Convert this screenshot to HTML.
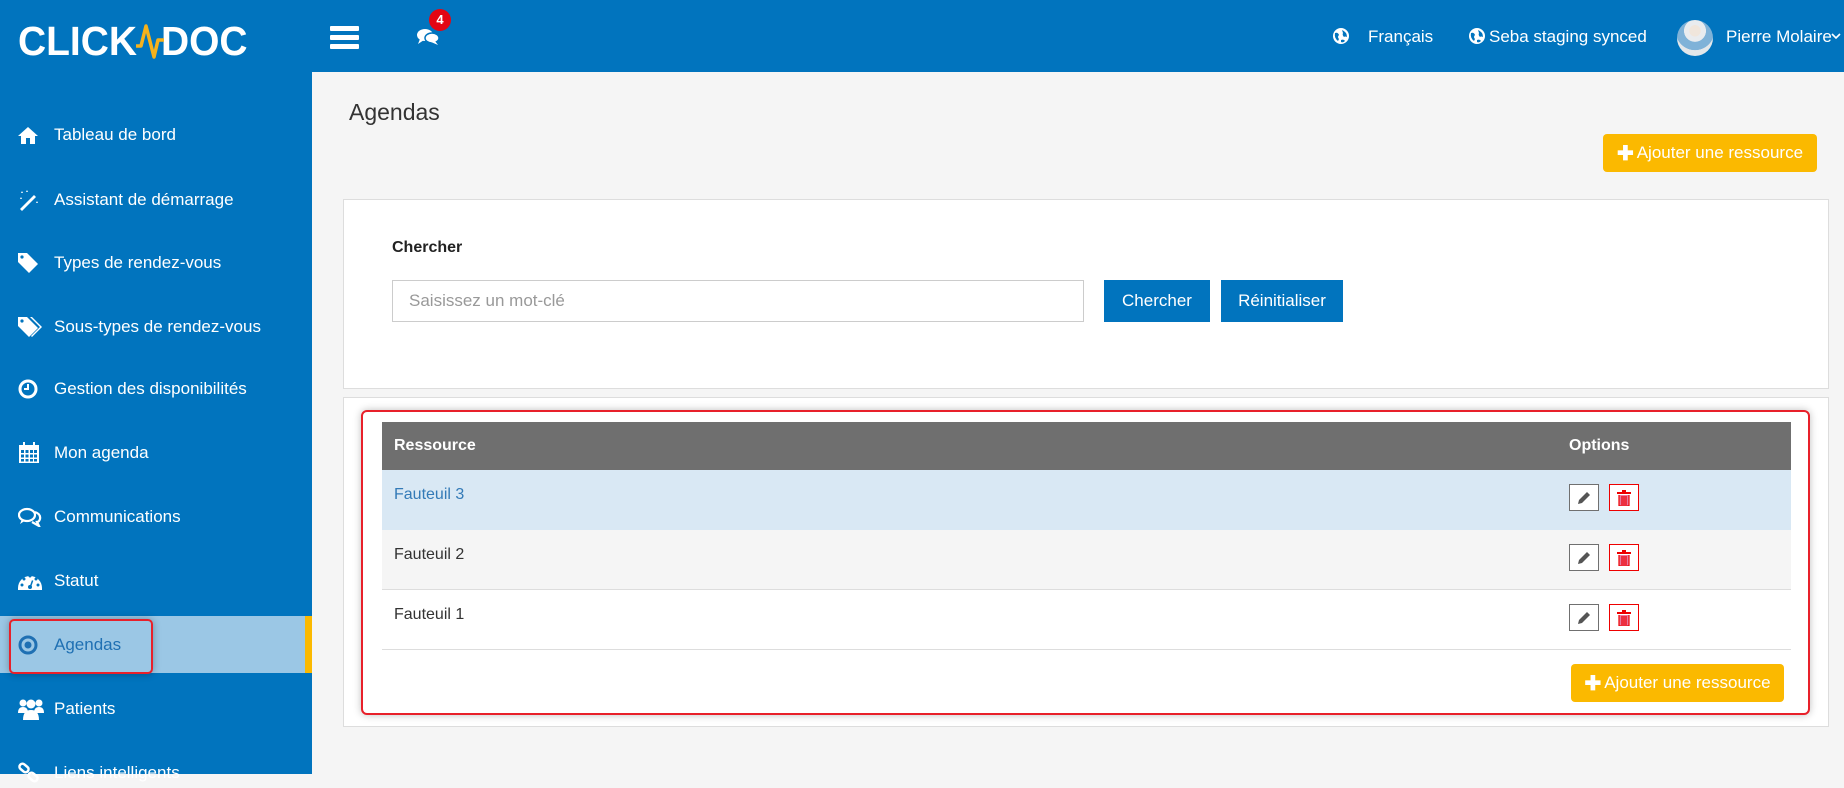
<!DOCTYPE html>
<html><head><meta charset="utf-8"><style>
*{box-sizing:border-box;margin:0;padding:0}
body{width:1844px;height:774px;overflow:hidden;background:#f5f5f5;font-family:"Liberation Sans",Arial,sans-serif;position:relative}
.top{position:absolute;left:0;top:0;width:1844px;height:72px;background:#0174be;color:#fff}
.side{position:absolute;left:0;top:72px;width:312px;height:702px;background:#0174be;color:#fff}
.abs{position:absolute}
.item{position:absolute;left:0;width:312px;height:30px;font-size:17px;display:flex;align-items:center}
.item svg{position:absolute;left:18px}
.item span{position:absolute;left:54px}
.btnY{position:absolute;background:#fbb900;color:#fff;border-radius:4px;font-size:17px;display:flex;align-items:center;justify-content:center}
.panel{position:absolute;background:#fff;border:1px solid #ddd}
.ic{position:absolute;width:30px;height:27px;border:1px solid #707070;background:#fff;display:flex;align-items:center;justify-content:center}
.ic.d{border-color:#e00}
</style></head><body>
<div class="top">
  <div class="abs" style="left:18px;top:18px;font-size:41px;font-weight:bold;transform:scaleX(0.95);transform-origin:left;white-space:nowrap">CLICK</div>
  <div class="abs" style="left:161px;top:18px;font-size:41px;font-weight:bold;transform:scaleX(0.95);transform-origin:left;white-space:nowrap">DOC</div>
  <svg class="abs" style="left:136px;top:20px" width="28" height="42" viewBox="0 0 28 42"><polyline points="0,26 5,26 10,6 18,37 22,20 28,20" fill="none" stroke="#f6b21b" stroke-width="3.5" stroke-linejoin="round"/></svg>
  <div class="abs" style="left:330px;top:26px;width:29px;height:5px;background:#fff;border-radius:1px;box-shadow:0 9px 0 #fff,0 18px 0 #fff"></div>
  <svg class="abs" style="left:417px;top:28px" width="22" height="18" viewBox="0 0 22 18"><ellipse cx="8" cy="7" rx="8" ry="6" fill="#fff"/><path d="M3 11 L1 16 L7 12Z" fill="#fff"/><ellipse cx="15" cy="10" rx="7" ry="5" fill="#fff" stroke="#0174be" stroke-width="1.5"/><path d="M18 13 L21 17 L14 14Z" fill="#fff"/></svg>
  <div class="abs" style="left:429px;top:9px;width:22px;height:22px;border-radius:50%;background:#e30613;font-size:13px;font-weight:bold;text-align:center;line-height:22px">4</div>
  <svg class="abs" style="left:1333px;top:28px" width="16" height="16" viewBox="0 0 16 16"><circle cx="8" cy="8" r="8" fill="#fff"/><path d="M2 5 Q5 4 6 7 Q4 9 6 11 L5 13 Q1 10 2 5Z M9 2 Q14 4 14 9 Q12 8 11 9 Q9 7 10 5Z M8 12 Q11 11 12 13 Q10 15 8 14Z" fill="#0174be"/></svg>
  <div class="abs" style="left:1368px;top:27px;font-size:17px">Français</div>
  <svg class="abs" style="left:1469px;top:28px" width="16" height="16" viewBox="0 0 16 16"><circle cx="8" cy="8" r="8" fill="#fff"/><path d="M2 5 Q5 4 6 7 Q4 9 6 11 L5 13 Q1 10 2 5Z M9 2 Q14 4 14 9 Q12 8 11 9 Q9 7 10 5Z M8 12 Q11 11 12 13 Q10 15 8 14Z" fill="#0174be"/></svg>
  <div class="abs" style="left:1489px;top:27px;font-size:17px">Seba staging synced</div>
  <div class="abs" style="left:1677px;top:20px;width:36px;height:36px;border-radius:50%;background:radial-gradient(circle at 50% 30%,#f0e6dc 0 18%,#e9ecef 19% 35%,#7fb2d8 36% 62%,#e3e7ea 63%)"></div>
  <div class="abs" style="left:1726px;top:27px;font-size:17px">Pierre Molaire</div>
  <svg class="abs" style="left:1831px;top:33px" width="10" height="7" viewBox="0 0 10 7"><polyline points="1,1 5,5 9,1" fill="none" stroke="#fff" stroke-width="1.6"/></svg>
</div>
<div class="side">
  <div class="item" style="top:48px"><svg width="20" height="18" viewBox="0 0 20 18"><path d="M10 1 L20 10 L17 10 L17 18 L12 18 L12 12 L8 12 L8 18 L3 18 L3 10 L0 10Z" fill="#fff"/></svg><span>Tableau de bord</span></div>
  <div class="item" style="top:113px"><svg width="22" height="22" viewBox="0 0 22 22"><path d="M2 20 L16 6 L18 8 L4 22Z" fill="#fff"/><path d="M4 2 L5 4 L3 4Z M9 1 L10 3 L8 3Z M19 12 L20 14 L18 14Z M3 8 L4 10 L2 10Z" fill="#fff"/></svg><span>Assistant de démarrage</span></div>
  <div class="item" style="top:176px"><svg width="20" height="20" viewBox="0 0 20 20"><path d="M0 0 L9 0 L20 11 L11 20 L0 9Z" fill="#fff"/><circle cx="4" cy="4" r="1.6" fill="#0174be"/></svg><span>Types de rendez-vous</span></div>
  <div class="item" style="top:240px"><svg width="24" height="20" viewBox="0 0 24 20"><path d="M0 0 L9 0 L20 11 L11 20 L0 9Z" fill="#fff"/><path d="M12 0 L14 0 L24 10 L14 20 L13 19 L22 10Z" fill="#fff"/><circle cx="4" cy="4" r="1.6" fill="#0174be"/></svg><span>Sous-types de rendez-vous</span></div>
  <div class="item" style="top:302px"><svg width="20" height="20" viewBox="0 0 20 20"><circle cx="10" cy="10" r="8" fill="none" stroke="#fff" stroke-width="3"/><path d="M10 5 L10 10 L6 10" fill="none" stroke="#fff" stroke-width="2"/></svg><span>Gestion des disponibilités</span></div>
  <div class="item" style="top:366px"><svg width="22" height="22" viewBox="0 0 22 22"><rect x="1" y="3" width="20" height="18" fill="#fff"/><g fill="#0174be"><rect x="3" y="8" width="3" height="3"/><rect x="7.5" y="8" width="3" height="3"/><rect x="12" y="8" width="3" height="3"/><rect x="16" y="8" width="3" height="3"/><rect x="3" y="12.5" width="3" height="3"/><rect x="7.5" y="12.5" width="3" height="3"/><rect x="12" y="12.5" width="3" height="3"/><rect x="16" y="12.5" width="3" height="3"/><rect x="3" y="17" width="3" height="2.5"/><rect x="7.5" y="17" width="3" height="2.5"/><rect x="12" y="17" width="3" height="2.5"/><rect x="16" y="17" width="3" height="2.5"/></g><rect x="5" y="0" width="2" height="5" fill="#fff"/><rect x="15" y="0" width="2" height="5" fill="#fff"/></svg><span>Mon agenda</span></div>
  <div class="item" style="top:430px"><svg width="24" height="20" viewBox="0 0 24 20"><ellipse cx="9" cy="8" rx="8" ry="6" fill="none" stroke="#fff" stroke-width="2.2"/><path d="M4 12 L2 17 L8 13" fill="#fff"/><path d="M17 5 Q23 7 22 12 Q21 15 19 15 L21 19 L14 15" fill="none" stroke="#fff" stroke-width="2.2"/></svg><span>Communications</span></div>
  <div class="item" style="top:494px"><svg width="24" height="18" viewBox="0 0 24 18"><path d="M0 16 A12 12 0 0 1 24 16 L24 18 L0 18Z" fill="#fff"/><g fill="#0174be"><circle cx="4" cy="13" r="1.5"/><circle cx="6" cy="7" r="1.5"/><circle cx="12" cy="4" r="1.5"/><circle cx="18" cy="7" r="1.5"/><circle cx="20" cy="13" r="1.5"/><circle cx="12" cy="15" r="2"/><rect x="11.5" y="8" width="1.5" height="7" transform="rotate(20 12 15)"/></g></svg><span>Statut</span></div>
  <div class="abs" style="left:0;top:544px;width:305px;height:57px;background:#9bc7e5"></div>
  <div class="abs" style="left:305px;top:544px;width:7px;height:57px;background:#fbb900"></div>
  <div class="abs" style="left:9px;top:547px;width:144px;height:55px;border:2px solid #e8202a;border-radius:5px;box-shadow:0 0 8px rgba(0,0,0,.3)"></div>
  <div class="item" style="top:558px;color:#1f70b3"><svg width="20" height="20" viewBox="0 0 20 20"><circle cx="10" cy="10" r="8" fill="none" stroke="#1f70b3" stroke-width="3"/><circle cx="10" cy="10" r="3.5" fill="#1f70b3"/></svg><span>Agendas</span></div>
  <div class="item" style="top:622px"><svg width="26" height="22" viewBox="0 0 26 22"><circle cx="5" cy="5" r="3.5" fill="#fff"/><circle cx="21" cy="5" r="3.5" fill="#fff"/><circle cx="13" cy="6" r="4.5" fill="#fff"/><path d="M0 15 Q0 9 5 9 Q10 9 10 15Z M16 15 Q16 9 21 9 Q26 9 26 15Z M5 22 Q5 12 13 12 Q21 12 21 22Z" fill="#fff"/></svg><span>Patients</span></div>
  <div class="item" style="top:686px"><svg width="22" height="22" viewBox="0 0 22 22"><rect x="1" y="3" width="10" height="6" rx="3" fill="none" stroke="#fff" stroke-width="2.5" transform="rotate(40 6 6)"/><rect x="10" y="12" width="10" height="6" rx="3" fill="none" stroke="#fff" stroke-width="2.5" transform="rotate(40 15 15)"/></svg><span>Liens intelligents</span></div>
</div>

<div class="abs" style="left:349px;top:99px;font-size:23px;color:#333">Agendas</div>
<div class="btnY" style="left:1603px;top:134px;width:214px;height:38px"><b style="font-size:20px;margin-right:3px">✚</b>Ajouter une ressource</div>

<div class="panel" style="left:343px;top:199px;width:1486px;height:190px">
  <div class="abs" style="left:48px;top:39px;font-size:16px;font-weight:bold;color:#222">Chercher</div>
  <div class="abs" style="left:48px;top:80px;width:692px;height:42px;border:1px solid #ccc;background:#fff;font-size:17px;color:#999;padding:10px 16px">Saisissez un mot-clé</div>
  <div class="abs" style="left:760px;top:80px;width:106px;height:42px;background:#0174be;color:#fff;font-size:17px;text-align:center;line-height:42px">Chercher</div>
  <div class="abs" style="left:877px;top:80px;width:122px;height:42px;background:#0174be;color:#fff;font-size:17px;text-align:center;line-height:42px">Réinitialiser</div>
</div>

<div class="panel" style="left:343px;top:397px;width:1486px;height:330px"></div>
<div class="abs" style="left:361px;top:410px;width:1449px;height:305px;border:2px solid #e8202a;border-radius:6px;box-shadow:0 0 8px rgba(0,0,0,.25);background:#fff"></div>
<div class="abs" style="left:382px;top:422px;width:1409px;height:48px;background:#6f6f6f;color:#fff;font-size:16px;font-weight:bold">
  <span class="abs" style="left:12px;top:15px">Ressource</span><span class="abs" style="left:1187px;top:15px">Options</span></div>
<div class="abs" style="left:382px;top:470px;width:1409px;height:60px;background:#d9e8f4"></div>
<div class="abs" style="left:382px;top:530px;width:1409px;height:60px;background:#f5f5f5;border-bottom:1px solid #ddd"></div>
<div class="abs" style="left:382px;top:590px;width:1409px;height:60px;background:#fff;border-bottom:1px solid #ddd"></div>
<div class="abs" style="left:394px;top:486px;font-size:16px;color:#337ab7">Fauteuil 3</div>
<div class="abs" style="left:394px;top:546px;font-size:16px;color:#333">Fauteuil 2</div>
<div class="abs" style="left:394px;top:606px;font-size:16px;color:#333">Fauteuil 1</div>

<div class="ic" style="left:1569px;top:484px"><svg width="16" height="16" viewBox="0 0 16 16"><path d="M2 14 L3 10 L11 2 L14 5 L6 13Z" fill="#555"/></svg></div>
<div class="ic d" style="left:1609px;top:484px"><svg width="14" height="16" viewBox="0 0 14 16"><rect x="5" y="0" width="4" height="2" fill="#e00"/><rect x="0" y="2" width="14" height="2" fill="#e00"/><rect x="2" y="5" width="10" height="11" fill="#e87aa0"/><path d="M2 5 V16 H12 V5 M5 6 V15 M7 6 V15 M9 6 V15" fill="none" stroke="#e00" stroke-width="1.2"/></svg></div>
<div class="ic" style="left:1569px;top:544px"><svg width="16" height="16" viewBox="0 0 16 16"><path d="M2 14 L3 10 L11 2 L14 5 L6 13Z" fill="#555"/></svg></div>
<div class="ic d" style="left:1609px;top:544px"><svg width="14" height="16" viewBox="0 0 14 16"><rect x="5" y="0" width="4" height="2" fill="#e00"/><rect x="0" y="2" width="14" height="2" fill="#e00"/><rect x="2" y="5" width="10" height="11" fill="#e87aa0"/><path d="M2 5 V16 H12 V5 M5 6 V15 M7 6 V15 M9 6 V15" fill="none" stroke="#e00" stroke-width="1.2"/></svg></div>
<div class="ic" style="left:1569px;top:604px"><svg width="16" height="16" viewBox="0 0 16 16"><path d="M2 14 L3 10 L11 2 L14 5 L6 13Z" fill="#555"/></svg></div>
<div class="ic d" style="left:1609px;top:604px"><svg width="14" height="16" viewBox="0 0 14 16"><rect x="5" y="0" width="4" height="2" fill="#e00"/><rect x="0" y="2" width="14" height="2" fill="#e00"/><rect x="2" y="5" width="10" height="11" fill="#e87aa0"/><path d="M2 5 V16 H12 V5 M5 6 V15 M7 6 V15 M9 6 V15" fill="none" stroke="#e00" stroke-width="1.2"/></svg></div>

<div class="btnY" style="left:1571px;top:664px;width:213px;height:38px"><b style="font-size:20px;margin-right:3px">✚</b>Ajouter une ressource</div>
</body></html>
